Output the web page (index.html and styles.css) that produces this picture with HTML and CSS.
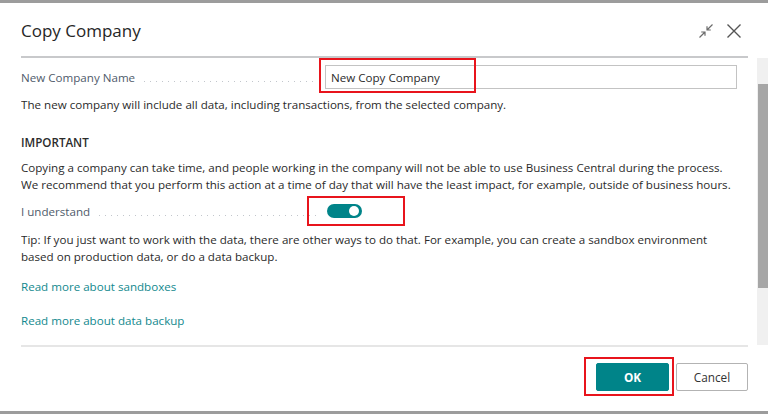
FILE: index.html
```html
<!DOCTYPE html>
<html lang="en">

<head>
    <meta charset="UTF-8">
    <meta name="viewport" content="width=device-width, initial-scale=1.0">
    <title>Copy Company</title>
    <link rel="stylesheet" href="styles.css">
</head>

<body>
    <div class="dialog">
        <div class="dialog-header">
            <h1 class="dialog-title">Copy Company</h1>
            <div class="header-actions">
                <button class="icon-btn" title="Collapse">
                    <svg width="16" height="16" viewBox="0 0 16 16" fill="none" stroke="#6b6b6b" stroke-width="1.2">
                        <path d="M14.5 1.5 L9 7 M9 3.2 V7 H12.8" />
                        <path d="M1.5 14.5 L7 9 M3.2 9 H7 V12.8" />
                    </svg>
                </button>
                <button class="icon-btn" title="Close">
                    <svg width="16" height="16" viewBox="0 0 16 16" fill="none" stroke="#555" stroke-width="1.4">
                        <path d="M1.5 1.5 L14.5 14.5 M14.5 1.5 L1.5 14.5" />
                    </svg>
                </button>
            </div>
        </div>

        <div class="dialog-body">
            <div class="content">
                <div class="field-row">
                    <label class="field-label" for="company-name">New Company Name<span class="leader"></span></label>
                    <div class="field-value input-value">
                        <input type="text" id="company-name" class="text-input" value="New Copy Company">
                        <span class="highlight highlight-input"></span>
                    </div>
                </div>

                <p class="text desc">The new company will include all data, including transactions, from the selected company.</p>

                <p class="text heading">IMPORTANT</p>
                <p class="text para">Copying a company can take time, and people working in the company will not be able to use Business Central during the process.<br>
                    We recommend that you perform this action at a time of day that will have the least impact, for example, outside of business hours.</p>

                <div class="field-row toggle-row">
                    <label class="field-label">I understand<span class="leader"></span></label>
                    <div class="field-value">
                        <span class="toggle on"><span class="knob"></span></span>
                        <span class="highlight highlight-toggle"></span>
                    </div>
                </div>

                <p class="text tip">Tip: If you just want to work with the data, there are other ways to do that. For example, you can create a sandbox environment<br>
                    based on production data, or do a data backup.</p>

                <a class="link link-first" href="#">Read more about sandboxes</a>
                <a class="link link-second" href="#">Read more about data backup</a>
            </div>
            <div class="scrollbar">
                <div class="scroll-thumb"></div>
            </div>
        </div>

        <div class="dialog-footer">
            <div class="btn-wrap">
                <button class="btn btn-primary">OK</button>
                <span class="highlight highlight-ok"></span>
            </div>
            <button class="btn btn-secondary">Cancel</button>
        </div>
    </div>
</body>

</html>
```

FILE: styles.css
```css
body {
    margin: 0;
    padding: 3px 0 0;
    height: 414px;
    box-sizing: border-box;
    overflow: hidden;
    background-color: #9c9c9c;
    font-family: "Open Sans", "Noto Sans", sans-serif;
    color: #2b2b2b;
}

.dialog {
    background-color: #ffffff;
    height: 408px;
    display: flex;
    flex-direction: column;
}

.dialog-header {
    height: 53px;
    margin: 0 20px 0 21px;
    border-bottom: 2px solid #c8c9cb;
    display: flex;
    align-items: center;
    justify-content: space-between;
}

.dialog-title {
    margin: 2px 0 0;
    font-size: 17px;
    font-weight: 400;
    color: #262626;
}

.header-actions {
    display: flex;
    align-items: center;
    gap: 12px;
    margin-right: 6px;
    margin-top: 2px;
}

.icon-btn {
    background: none;
    border: none;
    padding: 0;
    width: 16px;
    height: 16px;
    cursor: pointer;
}

.icon-btn svg {
    display: block;
}

.dialog-body {
    height: 287px;
    display: flex;
}

.content {
    flex: 1;
    margin: 0 9px 0 21px;
    padding-top: 7px;
    overflow: hidden;
    display: flex;
    flex-direction: column;
    align-items: flex-start;
    font-size: 11.6px;
    line-height: 17px;
}

.scrollbar {
    width: 11px;
    background-color: #f0f0f0;
}

.scroll-thumb {
    margin: 26px 0 0 1px;
    height: 204px;
    background-color: #a6a6a6;
}

.field-row {
    display: flex;
    align-items: center;
    width: 100%;
    height: 24px;
}

.field-label {
    width: 297px;
    display: flex;
    align-items: baseline;
    color: #4f5b6b;
    white-space: nowrap;
}

.leader {
    flex: 1;
    height: 5px;
    margin: 0 0 0 9px;
    background-image: linear-gradient(to right, #c2c6cc 1px, transparent 1px);
    background-size: 6px 1px;
    background-repeat: repeat-x;
    background-position: left bottom;
}

.field-value {
    position: relative;
    flex: 1;
    margin-left: 7px;
    display: flex;
    align-items: center;
}

.input-value {
    margin-right: 11px;
}

.text-input {
    width: 100%;
    height: 24px;
    box-sizing: border-box;
    border: 1px solid #c3c3c3;
    padding: 0 5px;
    font-family: inherit;
    font-size: 11.6px;
    color: #2b2b2b;
    outline: none;
}

.text {
    margin: 0;
}

.desc {
    margin-top: 7px;
}

.heading {
    margin-top: 21px;
    font-weight: 600;
}

.para {
    margin-top: 8px;
}

.toggle-row {
    margin-top: 8px;
    height: 20px;
}

.toggle {
    display: inline-block;
    position: relative;
    width: 35px;
    height: 14px;
    margin-left: 2px;
    border-radius: 7px;
    background-color: #008489;
}

.toggle .knob {
    position: absolute;
    top: 2px;
    right: 3px;
    width: 10px;
    height: 10px;
    border-radius: 50%;
    background-color: #ffffff;
}

.tip {
    margin-top: 10px;
}

.link {
    color: #12898e;
    text-decoration: none;
}

.link-first {
    margin-top: 13px;
}

.link-second {
    margin-top: 17px;
}

.highlight {
    position: absolute;
    border: 2px solid #e8141c;
    pointer-events: none;
}

.highlight-input {
    left: -6px;
    top: -7px;
    width: 153px;
    height: 31px;
}

.highlight-toggle {
    left: -18px;
    top: -8px;
    width: 94px;
    height: 26px;
}

.dialog-footer {
    margin: 0 20px 0 21px;
    border-top: 2px solid #e6e6e6;
    padding-top: 16px;
    display: flex;
    justify-content: flex-end;
    gap: 7px;
}

.btn-wrap {
    position: relative;
}

.btn {
    height: 28px;
    border-radius: 2px;
    font-family: inherit;
    font-size: 11.8px;
    cursor: pointer;
}

.btn-primary {
    width: 73px;
    background-color: #008489;
    border: 1px solid #008489;
    color: #ffffff;
    font-weight: 700;
}

.btn-secondary {
    width: 72px;
    background-color: #ffffff;
    border: 1px solid #b3b3b3;
    color: #333333;
}

.highlight-ok {
    left: -12px;
    top: -6px;
    width: 86px;
    height: 35px;
}
```
